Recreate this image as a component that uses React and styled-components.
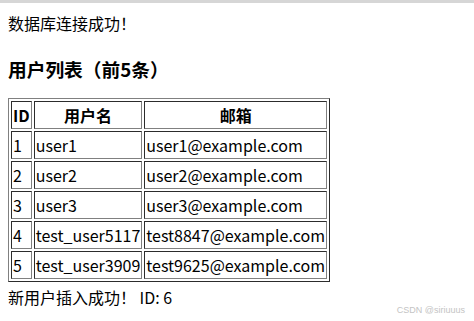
import React from 'react';
import styled, { createGlobalStyle } from 'styled-components';

const GlobalStyle = createGlobalStyle`
  html, body {
    margin: 0;
    background: #ffffff;
  }
  body {
    font-family: "Noto Sans CJK SC", "Noto Sans", sans-serif;
    font-size: 16px;
    color: #000000;
  }
`;

const Page = styled.div`
  position: relative;
  min-height: 321px;
  box-sizing: border-box;
  border-top: 3px solid #d6d6d6;
  padding: 5px 8px 8px;
`;

const Line = styled.div`
  line-height: 31px;
`;

const Heading = styled.h3`
  font-size: 1.17em;
  font-weight: bold;
  line-height: 22px;
  margin: 1em 0;
`;

const UserTable = styled.table`
  border: 1px outset #808080;
  border-spacing: 2px;
  border-collapse: separate;
`;

const HeadCell = styled.th`
  border: 1px inset #808080;
  padding: 1px;
  font-weight: bold;
  text-align: center;
`;

const Cell = styled.td`
  border: 1px inset #808080;
  padding: 1px;
  text-align: left;
`;

const Watermark = styled.span`
  position: absolute;
  right: 9px;
  bottom: 6px;
  font-family: "Liberation Sans", Arial, sans-serif;
  font-size: 9px;
  color: #c4c4c4;
`;

const users = [
  { id: 1, name: 'user1', email: 'user1@example.com' },
  { id: 2, name: 'user2', email: 'user2@example.com' },
  { id: 3, name: 'user3', email: 'user3@example.com' },
  { id: 4, name: 'test_user5117', email: 'test8847@example.com' },
  { id: 5, name: 'test_user3909', email: 'test9625@example.com' },
];

export default function App() {
  return (
    <>
      <GlobalStyle />
      <Page>
        <Line>数据库连接成功！</Line>
        <Heading>用户列表（前5条）</Heading>
        <UserTable>
          <tbody>
            <tr>
              <HeadCell>ID</HeadCell>
              <HeadCell>用户名</HeadCell>
              <HeadCell>邮箱</HeadCell>
            </tr>
            {users.map((u) => (
              <tr key={u.id}>
                <Cell>{u.id}</Cell>
                <Cell>{u.name}</Cell>
                <Cell>{u.email}</Cell>
              </tr>
            ))}
          </tbody>
        </UserTable>
        <Line>新用户插入成功！ ID: {6}</Line>
        <Watermark>CSDN @siriuuus</Watermark>
      </Page>
    </>
  );
}
